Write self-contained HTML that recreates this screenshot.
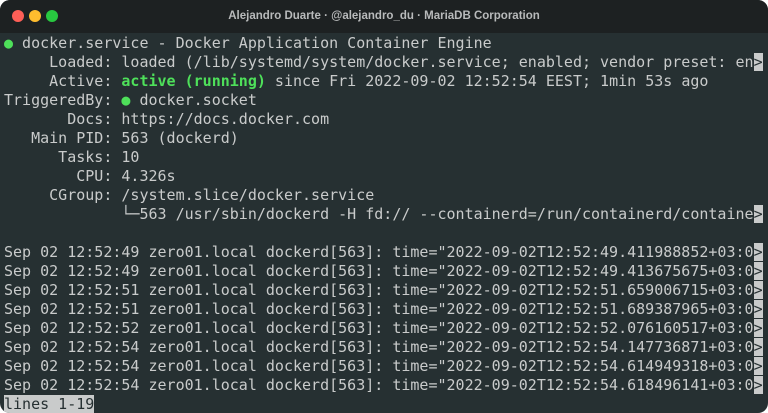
<!DOCTYPE html>
<html><head><style>
html,body{margin:0;padding:0;background:#fff;width:768px;height:413px;overflow:hidden}
.win{position:absolute;left:0;top:0;width:768px;height:413px;background:#263032;border-radius:10px;overflow:hidden}
.tb{height:33px;background:#1d2122;position:relative}
.d{position:absolute;top:10px;width:12px;height:12px;border-radius:50%}
.t{position:absolute;left:0;right:0;top:0;text-align:center;color:#b8babb;font:bold 11.5px "Liberation Sans",sans-serif;line-height:33px}
pre{margin:0;position:absolute;left:4px;top:34px;font:15px/19px "DejaVu Sans Mono","Liberation Mono",monospace;color:#c9cbcb;white-space:pre}
.g{color:#4ee05a}.b{color:#4ee05a;font-weight:bold}
.i{background:#c9cbcb;color:#263032}
</style></head><body><div class="win">
<div class="tb"><div class="d" style="left:12px;background:#fe5f57"></div><div class="d" style="left:29px;background:#febc2e"></div><div class="d" style="left:46px;background:#28c840"></div>
<div class="t">Alejandro Duarte · @alejandro_du · MariaDB Corporation</div></div>
<pre><span class="g">●</span> docker.service - Docker Application Container Engine
     Loaded: loaded (/lib/systemd/system/docker.service; enabled; vendor preset: en<span class="i">&gt;</span>
     Active: <span class="b">active (running)</span> since Fri 2022-09-02 12:52:54 EEST; 1min 53s ago
TriggeredBy: <span class="g">●</span> docker.socket
       Docs: https://docs.docker.com
   Main PID: 563 (dockerd)
      Tasks: 10
        CPU: 4.326s
     CGroup: /system.slice/docker.service
             └─563 /usr/sbin/dockerd -H fd:// --containerd=/run/containerd/containe<span class="i">&gt;</span>

Sep 02 12:52:49 zero01.local dockerd[563]: time="2022-09-02T12:52:49.411988852+03:0<span class="i">&gt;</span>
Sep 02 12:52:49 zero01.local dockerd[563]: time="2022-09-02T12:52:49.413675675+03:0<span class="i">&gt;</span>
Sep 02 12:52:51 zero01.local dockerd[563]: time="2022-09-02T12:52:51.659006715+03:0<span class="i">&gt;</span>
Sep 02 12:52:51 zero01.local dockerd[563]: time="2022-09-02T12:52:51.689387965+03:0<span class="i">&gt;</span>
Sep 02 12:52:52 zero01.local dockerd[563]: time="2022-09-02T12:52:52.076160517+03:0<span class="i">&gt;</span>
Sep 02 12:52:54 zero01.local dockerd[563]: time="2022-09-02T12:52:54.147736871+03:0<span class="i">&gt;</span>
Sep 02 12:52:54 zero01.local dockerd[563]: time="2022-09-02T12:52:54.614949318+03:0<span class="i">&gt;</span>
Sep 02 12:52:54 zero01.local dockerd[563]: time="2022-09-02T12:52:54.618496141+03:0<span class="i">&gt;</span>
<span class="i">lines 1-19</span></pre>
</div></body></html>
